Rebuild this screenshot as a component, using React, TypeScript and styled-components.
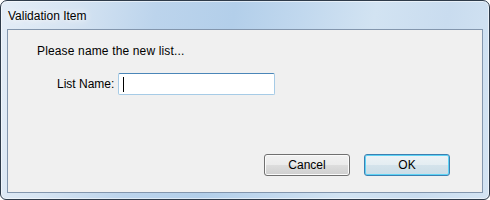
import React from "react";
import styled, { createGlobalStyle } from "styled-components";

const Global = createGlobalStyle`
  html, body { margin: 0; padding: 0; background: #ffffff; }
  body { font-family: "Liberation Sans", Arial, sans-serif; }
`;

const Window = styled.div`
  box-sizing: border-box;
  width: 490px;
  height: 200px;
  border: 1px solid #2e3b4a;
  border-radius: 7px 7px 6px 6px;
  padding: 0 6px 6px 6px;
  display: flex;
  flex-direction: column;
  background:
    linear-gradient(100deg,
      #e4edf7 0%,
      #d6e4f2 14%,
      #bcd4ec 30%,
      #b3cfea 45%,
      #c1d8ee 58%,
      #d2e3f2 72%,
      #c9dcef 86%,
      #d4e4f3 100%);
  box-shadow: inset 0 0 0 1px rgba(255, 255, 255, 0.55);
  overflow: hidden;
`;

const TitleBar = styled.div`
  height: 28px;
  display: flex;
  align-items: center;
  padding-left: 1px;
`;

const Title = styled.span`
  font-size: 12px;
  color: #000000;
  text-shadow: 0 0 6px #ffffff, 0 0 10px #ffffff;
  margin-top: 2px;
`;

const Client = styled.div`
  flex: 1;
  border: 1px solid #8396ad;
  background: #f0f0f0;
  display: flex;
  flex-direction: column;
  padding: 14px 32px 16px 29px;
`;

const Prompt = styled.div`
  font-size: 12px;
  letter-spacing: 0.15px;
  color: #000000;
  line-height: 15px;
`;

const FieldRow = styled.div`
  display: flex;
  align-items: center;
  gap: 4px;
  margin-top: 14px;
  padding-left: 20px;
`;

const Label = styled.span`
  font-size: 12px;
  color: #000000;
`;

const TextBox = styled.div`
  box-sizing: border-box;
  width: 157px;
  height: 22px;
  background: #ffffff;
  border: 1px solid #a6cbe6;
  border-top-color: #4a86b8;
  border-radius: 2px;
  display: flex;
  align-items: center;
  padding-left: 4px;
`;

const Caret = styled.span`
  width: 1px;
  height: 15px;
  background: #000000;
`;

const ButtonRow = styled.div`
  margin-top: auto;
  display: flex;
  justify-content: flex-end;
  gap: 14px;
`;

const Button = styled.button<{ $default?: boolean }>`
  box-sizing: border-box;
  width: 86px;
  height: 22px;
  padding: 0;
  font-family: "Liberation Sans", Arial, sans-serif;
  font-size: 12px;
  color: #000000;
  border-radius: 3px;
  border: 1px solid ${(p) => (p.$default ? "#3c7fb1" : "#707070")};
  box-shadow: inset 0 0 0 1px ${(p) => (p.$default ? "#5fd3f5" : "#fbfbfb")};
  background: ${(p) =>
    p.$default
      ? "linear-gradient(#edf3f6 0%, #e4edf2 48%, #d4e3eb 50%, #cbdde7 100%)"
      : "linear-gradient(#f2f2f2 0%, #ebebeb 48%, #dddddd 50%, #cfcfcf 100%)"};
`;

export default function App() {
  return (
    <>
      <Global />
      <Window>
        <TitleBar>
          <Title>Validation Item</Title>
        </TitleBar>
        <Client>
          <Prompt>Please name the new list...</Prompt>
          <FieldRow>
            <Label>List Name:</Label>
            <TextBox>
              <Caret />
            </TextBox>
          </FieldRow>
          <ButtonRow>
            <Button>Cancel</Button>
            <Button $default>OK</Button>
          </ButtonRow>
        </Client>
      </Window>
    </>
  );
}
